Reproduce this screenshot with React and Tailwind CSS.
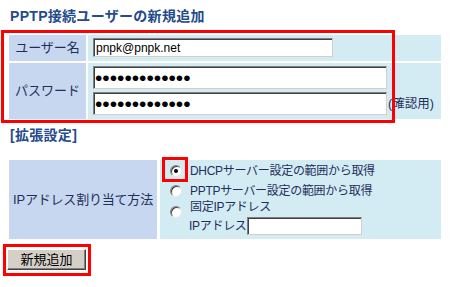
import React from "react";

const fieldBorder =
  "bg-white border border-t-[#808080] border-l-[#808080] border-b-[#d4d0c8] border-r-[#d4d0c8] shadow-[inset_1px_1px_0_#404040] outline-none";

const Radio = ({ checked, className = "" }) => (
  <span
    className={`relative inline-block w-[12px] h-[12px] shrink-0 rounded-full bg-white border border-t-[#808080] border-l-[#808080] border-b-[#e8e8e8] border-r-[#e8e8e8] shadow-[inset_1px_1px_0_#404040] ${className}`}
  >
    {checked && (
      <span className="absolute left-[3px] top-[3px] w-[4px] h-[4px] rounded-full bg-black" />
    )}
  </span>
);

const App = () => {
  return (
    <div className="relative w-[470px] h-[287px] bg-white overflow-hidden font-['Liberation_Sans','Noto_Sans_CJK_JP',sans-serif] text-[12px] text-[#1f2f5c]">
      <div className="pl-[9px] pt-[6px]">
        <div className="h-[20px] leading-[20px] pl-[1px] text-[14px] font-bold tracking-[0.3px] text-[#254b8c]">
          PPTP接続ユーザーの新規追加
        </div>

        {/* account table */}
        <div className="mt-[9px] w-[432px] grid grid-cols-[77px_1fr] gap-x-[2px] gap-y-[2px]">
          <div className="h-[26px] bg-[#c8d7f0] flex items-center justify-center text-[13px]">
            ユーザー名
          </div>
          <div className="h-[26px] bg-[#d3ecf3] pl-[5px] pt-[3px]">
            <input
              type="text"
              defaultValue="pnpk@pnpk.net"
              className={`w-[240px] h-[19px] px-[2px] text-[12px] text-black ${fieldBorder}`}
            />
          </div>
          <div className="h-[56px] bg-[#c8d7f0] flex items-center justify-center text-[13px]">
            パスワード
          </div>
          <div className="h-[56px] bg-[#d3ecf3] pl-[5px] pt-[3px] flex flex-col gap-[3px]">
            <input
              type="password"
              defaultValue="abcdefghijklm"
              className={`w-[294px] h-[23px] px-[1px] text-[21px] leading-none text-black ${fieldBorder}`}
            />
            <div className="flex items-end gap-[1px]">
              <input
                type="password"
                defaultValue="abcdefghijklm"
                className={`w-[294px] h-[23px] px-[1px] text-[21px] leading-none text-black ${fieldBorder}`}
              />
              <span className="text-[12.5px] leading-[16px] pb-[3px]">(確認用)</span>
            </div>
          </div>
        </div>

        <div className="mt-[6px] h-[20px] leading-[20px] pl-[1px] text-[14px] font-bold tracking-[0.3px] text-[#254b8c]">
          [拡張設定]
        </div>

        {/* extended settings */}
        <div className="mt-[15px] w-[432px] grid grid-cols-[148px_1fr] gap-x-[3px]">
          <div className="h-[79px] bg-[#c8d7f0] flex items-center justify-center text-[13px] tracking-[-0.2px]">
            IPアドレス割り当て方法
          </div>
          <div className="h-[79px] bg-[#d3ecf3] pl-[10px] flex flex-col tracking-[-0.3px]">
            <div className="h-[21px] flex items-center gap-[8px]">
              <Radio checked />
              <span>DHCPサーバー設定の範囲から取得</span>
            </div>
            <div className="h-[19px] flex items-center gap-[8px]">
              <Radio />
              <span>PPTPサーバー設定の範囲から取得</span>
            </div>
            <div className="h-[16px] flex items-start gap-[8px]">
              <Radio className="mt-[6px]" />
              <span className="leading-[12px] mt-[1px]">固定IPアドレス</span>
            </div>
            <div className="h-[20px] flex items-center pl-[19px]">
              <span>IPアドレス</span>
              <input
                type="text"
                className={`w-[115px] h-[18px] px-[2px] text-[12px] ${fieldBorder}`}
              />
            </div>
          </div>
        </div>

        <button className="mt-[10px] -ml-[2px] w-[79px] h-[21px] bg-[#d4d0c8] border border-t-white border-l-white border-b-[#404040] border-r-[#404040] shadow-[inset_-1px_-1px_0_#808080] text-[13px] text-black leading-none">
          新規追加
        </button>
      </div>

      {/* annotation boxes */}
      <div className="absolute left-[1px] top-[30px] w-[394px] h-[93px] border-[3px] border-[#ff0000] pointer-events-none" />
      <div className="absolute left-[162px] top-[157px] w-[26px] h-[25px] border-[3px] border-[#ff0000] pointer-events-none" />
      <div className="absolute left-[3px] top-[244px] w-[88px] h-[32px] border-[3px] border-[#ff0000] pointer-events-none" />
    </div>
  );
};

export default App;
